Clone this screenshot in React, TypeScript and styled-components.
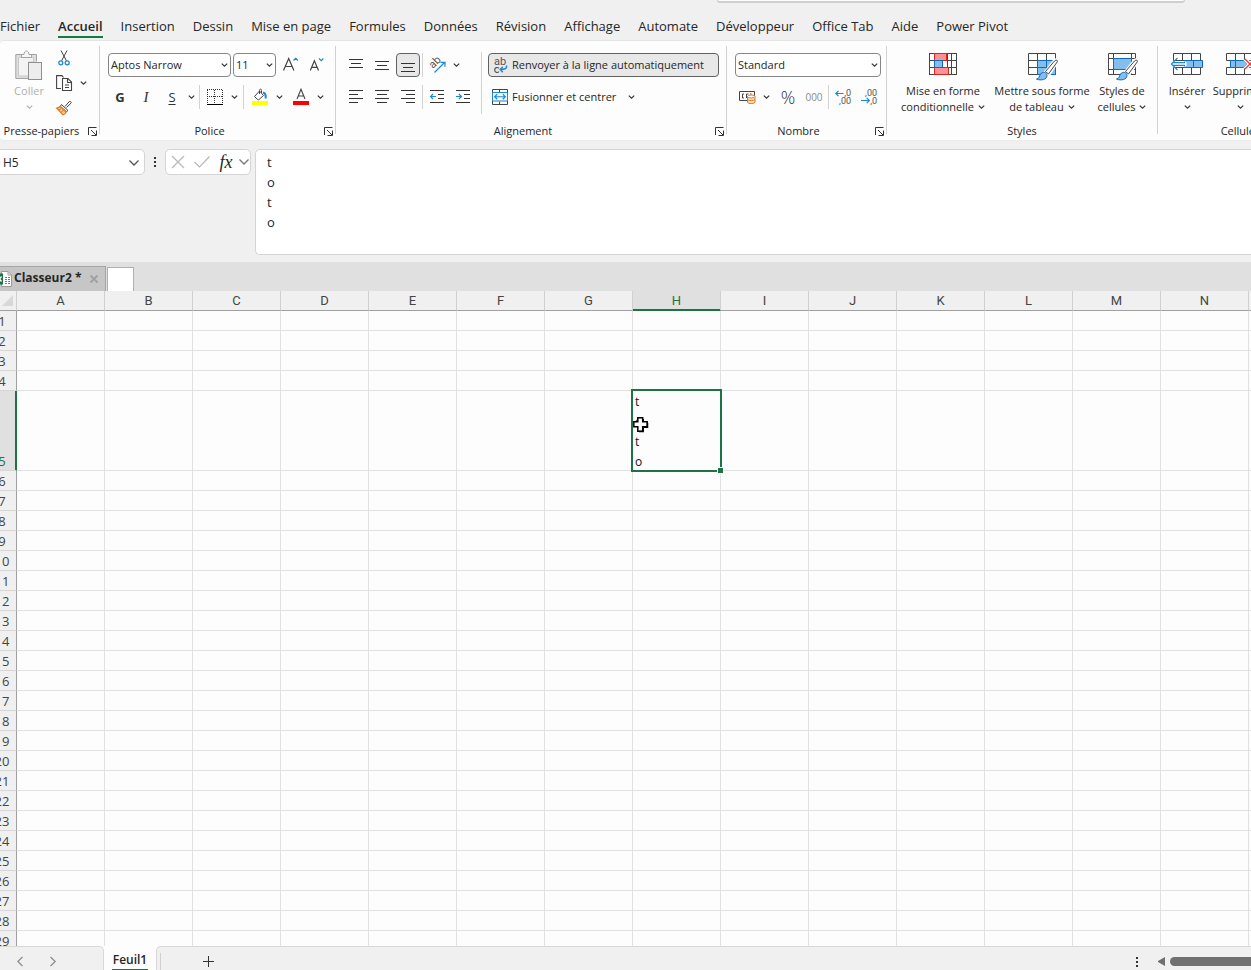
import React from 'react';
import styled, { createGlobalStyle, css } from 'styled-components';

const green = '#1f7246';
const ink = '#262626';
const line = '#444444';
const blue = '#1e88d0';
const uiFont = '"Open Sans", "Noto Sans", sans-serif';
const headFont = 'Roboto, "Noto Sans", sans-serif';

const GlobalStyle = createGlobalStyle`
  *, *::before, *::after { box-sizing: border-box; }
  body { margin: 0; background: #f0f0f0; color: ${ink}; font: 11px/16px ${uiFont}; }
  button, input, select, textarea { font: inherit; color: inherit; margin: 0; }
  button { border: 0; padding: 0; background: transparent; }
  svg { display: block; flex: none; overflow: visible; }
`;

const Window = styled.div`
  display: flex;
  flex-direction: column;
  height: 100vh;
  overflow: hidden;
`;

/* ---------- top strip and ribbon tabs ---------- */

const SearchEdge = styled.div`
  flex: none;
  width: 468px;
  height: 3px;
  margin: 0 66px 0 auto;
  background: #fdfdfd;
  border: 1px solid #cfcfcf;
  border-width: 0 1px 2px;
  border-radius: 0 0 4px 4px;
`;

const RibbonTabs = styled.nav`
  flex: none;
  display: flex;
  gap: 18px;
  height: 37px;
  padding-top: 13px;
  overflow: hidden;
`;

const RibbonTab = styled.button<{ $active?: boolean }>`
  flex: none;
  height: 22px;
  border-bottom: 2px solid ${p => (p.$active ? '#107c41' : 'transparent')};
  font-size: 13px;
  line-height: 20px;
  font-weight: ${p => (p.$active ? 600 : 400)};
  white-space: nowrap;
`;

/* ---------- ribbon ---------- */

const Ribbon = styled.div`
  flex: none;
  display: flex;
  height: 101px;
  padding: 5px 0 6px;
  background: #fdfdfd;
  border-top: 1px solid #e6e6e6;
  border-bottom: 1px solid #ececec;
  border-radius: 4px 0 0 4px;
  overflow: hidden;
`;

const Group = styled.section<{ $width: number }>`
  flex: none;
  display: flex;
  flex-direction: column;
  width: ${p => p.$width}px;
  border-right: 1px solid #d2d2d2;
`;

const GroupBody = styled.div<{ $left?: number }>`
  flex: 1;
  display: flex;
  padding: 7px 0 0 ${p => p.$left ?? 7}px;
`;

const GroupFooter = styled.footer`
  flex: none;
  display: flex;
  align-items: center;
  height: 16px;
  margin-bottom: -5px;
`;

const GroupName = styled.span`
  flex: 1;
  text-align: center;
  white-space: nowrap;
`;

const Launcher = styled.button`
  width: 16px;
  display: grid;
  place-items: center start;
  padding-left: 5px;
`;

const Rows = styled.div<{ $dense?: boolean }>`
  display: flex;
  flex-direction: column;
  gap: ${p => (p.$dense ? 1 : 8)}px;
  margin-top: ${p => (p.$dense ? -7 : 0)}px;
`;

const Row = styled.div`
  display: flex;
  align-items: center;
  height: 24px;
`;

const ComboRow = styled(Row)`
  padding-left: 1px;
`;

const AlignText = styled.div`
  display: flex;
  margin-left: auto;
  padding-right: 7px;
`;

const IconButton = styled.button<{ $active?: boolean }>`
  flex: none;
  display: grid;
  place-items: center;
  width: 26px;
  height: 24px;
  ${p =>
    p.$active &&
    css`
      background: #e8e8e8;
      border: 1px solid #616161;
      border-radius: 4px;
      width: 24px;
      margin: 0 1px;
    `}
`;

const ArrowButton = styled.button<{ $after?: number }>`
  flex: none;
  display: grid;
  place-items: center;
  width: 12px;
  height: 24px;
  margin-right: ${p => p.$after ?? 0}px;
`;

const Letter = styled.span<{ $bold?: boolean; $italic?: boolean; $underline?: boolean }>`
  font-size: 13px;
  line-height: 16px;
  color: #333;
  font-weight: ${p => (p.$bold ? 700 : 400)};
  ${p => p.$italic && 'font-style: italic; font-family: "Liberation Serif", serif; font-size: 15px;'}
  text-decoration: ${p => (p.$underline ? 'underline' : 'none')};
  text-underline-offset: 2px;
`;

const Percent = styled.span`
  font-size: 18px;
  line-height: 24px;
  font-weight: 300;
  color: #333;
`;

const Thousands = styled.span`
  font-size: 10px;
  color: #8a8a8a;
`;

const Divider = styled.i<{ $side?: number }>`
  flex: none;
  width: 1px;
  height: 24px;
  margin: 0 ${p => p.$side ?? 1}px;
  background: #d2d2d2;
`;

const TallDivider = styled.i`
  width: 1px;
  height: 62px;
  margin: -1px 6px 0 0;
  background: #d2d2d2;
`;

const ComboFrame = styled.span<{ $width: number }>`
  position: relative;
  flex: none;
  width: ${p => p.$width}px;
  margin-right: 2px;
  svg { position: absolute; right: 3px; top: 10px; pointer-events: none; }
`;

const Combo = styled.select`
  display: block;
  appearance: none;
  width: 100%;
  height: 24px;
  padding: 0 12px 0 2px;
  background: #fff;
  border: 1px solid #868686;
  border-radius: 4px;
`;

const WideButton = styled.button<{ $active?: boolean }>`
  display: flex;
  align-items: center;
  gap: 4px;
  height: 24px;
  padding: 0 8px 0 3px;
  border: 1px solid ${p => (p.$active ? '#616161' : 'transparent')};
  border-radius: 4px;
  background: ${p => (p.$active ? '#e8e8e8' : 'transparent')};
  width: ${p => (p.$active ? '231px' : 'auto')};
  white-space: nowrap;
`;

const BigButton = styled.button<{ $width: number; $muted?: boolean }>`
  flex: none;
  display: flex;
  flex-direction: column;
  align-items: center;
  width: ${p => p.$width}px;
  color: ${p => (p.$muted ? '#b0b0b0' : 'inherit')};
  white-space: nowrap;
`;

const BigIcon = styled.span`
  display: block;
  height: 30px;
`;

const LabelLine = styled.span`
  display: flex;
  align-items: center;
  justify-content: center;
  gap: 4px;
  height: 16px;
`;

/* ---------- formula bar ---------- */

const FormulaBar = styled.div`
  flex: none;
  display: flex;
  align-items: flex-start;
  padding: 8px 0 7px;
  background: #f0f0f0;
`;

const NameFrame = styled.div`
  position: relative;
  flex: none;
  width: 153px;
  margin-left: -8px;
  svg { position: absolute; right: 6px; top: 11px; pointer-events: none; }
`;

const NameBox = styled.input`
  display: block;
  width: 100%;
  height: 26px;
  padding: 0 24px 0 10px;
  background: #fff;
  border: 1px solid #d4d4d4;
  border-radius: 5px;
  font-size: 12px;
`;

const Dots = styled.span`
  flex: none;
  display: grid;
  place-items: center;
  width: 20px;
  height: 26px;
`;

const FormulaTools = styled.div`
  flex: none;
  display: flex;
  align-items: center;
  width: 86px;
  height: 26px;
  margin-right: 4px;
  background: #fff;
  border: 1px solid #d4d4d4;
  border-radius: 5px;
`;

const ToolButton = styled.button<{ $width: number }>`
  display: grid;
  place-items: center;
  width: ${p => p.$width}px;
  height: 24px;
  font: italic 18px/22px "Liberation Serif", serif;
`;

const FormulaInput = styled.textarea`
  flex: 1;
  min-width: 0;
  height: 106px;
  padding: 2px 11px;
  resize: none;
  background: #fff;
  border: 1px solid #d4d4d4;
  border-right: 0;
  border-radius: 5px 0 0 5px;
  outline: 0;
  font-size: 13px;
  line-height: 20px;
  overflow: hidden;
`;

/* ---------- workbook tabs ---------- */

const BookTabs = styled.div`
  flex: none;
  display: flex;
  align-items: flex-end;
  gap: 1px;
  height: 29px;
  background: #e0e0e0;
`;

const BookTab = styled.div`
  display: flex;
  align-items: center;
  height: 25px;
  width: 106px;
  background: #c6c6c6;
  border: 1px solid #a5a5a5;
  border-width: 1px 1px 0 0;
  font-weight: 700;
  font-size: 12px;
  white-space: nowrap;
`;

const BookMark = styled.span`
  margin-left: -4px;
`;

const BookName = styled.span`
  flex: 1;
  padding: 0 0 2px 2px;
`;

const CloseBook = styled.button`
  width: 22px;
  height: 20px;
  display: grid;
  place-items: center;
`;

const NewBook = styled.button`
  width: 27px;
  height: 24px;
  background: #fff;
  border: 1px solid #b0b0b0;
  border-bottom: 0;
`;

/* ---------- grid ---------- */

const SheetArea = styled.main`
  flex: 1;
  min-height: 0;
  overflow: hidden;
  background: #fdfdfd;
`;

const Sheet = styled.table`
  table-layout: fixed;
  width: 1px;
  margin-left: -12px;
  border-collapse: separate;
  border-spacing: 0;
`;

const RowCol = styled.col`
  width: 29px;
`;

const DataCol = styled.col`
  width: 88px;
`;

const headBase = css<{ $active?: boolean }>`
  padding: 1px 0 0;
  background: ${p => (p.$active ? '#e0e0e0' : '#f0f0f0')};
  color: ${p => (p.$active ? green : '#444')};
  font-weight: 400;
  font-size: 13px;
  line-height: 18px;
  text-align: center;
`;

const Corner = styled.td`
  padding: 0 3px 0 0;
  height: 20px;
  background: #f0f0f0;
  border-right: 1px solid #cfcfcf;
  border-bottom: 1px solid #a0a0a0;
  svg { margin-left: auto; }
`;

const ColHead = styled.th<{ $active?: boolean }>`
  ${headBase}
  height: 20px;
  font-family: ${headFont};
  border-right: 1px solid #d0d0d0;
  border-bottom: 1px solid ${p => (p.$active ? green : '#a0a0a0')};
  box-shadow: ${p => (p.$active ? `inset 0 -1px ${green}` : 'none')};
`;

const RowHead = styled.th<{ $active?: boolean }>`
  ${headBase}
  vertical-align: bottom;
  border-bottom: 1px solid #d6d6d6;
  border-right: 1px solid ${p => (p.$active ? green : '#a0a0a0')};
  box-shadow: ${p => (p.$active ? `inset -1px 0 ${green}` : 'none')};
`;

const Line = styled.tr<{ $tall?: boolean }>`
  height: ${p => (p.$tall ? 80 : 20)}px;
`;

const Cell = styled.td`
  position: relative;
  padding: 0 0 0 2px;
  border-right: 1px solid #e1e1e1;
  border-bottom: 1px solid #e1e1e1;
`;

const CellText = styled.div`
  height: 79px;
  padding-top: 1px;
  font-size: 12px;
  line-height: 20px;
  white-space: pre;
  color: #111;
`;

const Selection = styled.div`
  position: absolute;
  z-index: 1;
  inset: -2px;
  border: 2px solid ${green};
  &::after {
    content: '';
    position: absolute;
    right: -4px;
    bottom: -4px;
    width: 7px;
    height: 7px;
    background: ${green};
    border: 1px solid #fdfdfd;
  }
`;

const Pointer = styled.div`
  position: absolute;
  z-index: 2;
  left: 0;
  top: 26px;
`;

/* ---------- sheet bar ---------- */

const SheetBar = styled.footer`
  flex: none;
  display: flex;
  height: 24px;
  background: #fdfdfd;
`;

const SheetNav = styled.div`
  display: flex;
  align-items: center;
  width: 104px;
  padding: 6px 0 0 3px;
  background: #f0f0f0;
  border: 1px solid #d8d8d8;
  border-width: 1px 1px 0 0;
  border-radius: 0 5px 0 0;
`;

const NavButton = styled.button`
  display: grid;
  place-items: center;
  width: 33px;
  height: 16px;
`;

const SheetTab = styled.button`
  min-width: 36px;
  margin: 0 8px;
  padding-top: 4px;
  border-bottom: 1px solid ${green};
  font-weight: 600;
  font-size: 12px;
  line-height: 19px;
`;

const SheetRest = styled.div`
  flex: 1;
  display: flex;
  align-items: center;
  min-width: 0;
  padding: 6px 0 0 3px;
  background: #f0f0f0;
  border: 1px solid #d8d8d8;
  border-width: 1px 0 0 1px;
  border-radius: 5px 0 0 0;
`;

const AddSheet = styled.button`
  display: grid;
  place-items: center;
  width: 96px;
  height: 17px;
  border-left: 1px solid #d0d0d0;
`;

const ScrollZone = styled.div`
  display: flex;
  align-items: center;
  margin-left: auto;
`;

const ScrollLeft = styled.button`
  margin-left: 20px;
`;

const ScrollTrack = styled.div`
  width: 81px;
  height: 9px;
  margin-left: 5px;
  background: #707070;
  border-radius: 5px 0 0 5px;
`;

/* ---------- drawings ---------- */

const IconText = styled.text<{ $size: number }>`
  font: 400 ${p => p.$size}px ${headFont};
  fill: #555;
  stroke: none;
`;

const Chevron = ({ color = '#333' }: { color?: string }) => (
  <svg width="7" height="4" viewBox="0 0 7 4" fill="none" stroke={color} strokeWidth="1.2">
    <path d="M.8.6 3.5 3.2 6.2.6" />
  </svg>
);

const BigChevron = ({ color = '#555' }: { color?: string }) => (
  <svg width="10" height="6" viewBox="0 0 10 6" fill="none" stroke={color} strokeWidth="1.3">
    <path d="M.5.5 5 5 9.5.5" />
  </svg>
);

const LauncherIcon = () => (
  <svg width="9" height="9" viewBox="0 0 9 9" fill="none" stroke="#333">
    <path d="M8.500.5h-8v7.500M3 3l5 5M8.500 3.500v5H3.500" />
  </svg>
);

const PasteIcon = () => (
  <svg width="28" height="30" viewBox="0 3 28 30" fill="none" stroke="#a3a3a3">
    <path d="M.8 4.500h20.700v8h-8v16H.8z" fill="#dedede" stroke="none" />
    <path d="M13 28.500H.8v-24H7M16 4.500h5.500v7" />
    <path d="M3.500 7.500h15V12h-5v14h-10z" fill="#f3f3f3" stroke="#c8c8c8" />
    <path d="M6.500 4.500v3h10v-3h-2.500c0-2-1-3.500-2.500-3.500S9 2.500 9 4.500z" fill="#f6f6f6" />
    <rect x="13.500" y="12.500" width="13" height="17" fill="#ededed" stroke="#8f8f8f" />
  </svg>
);

const CutIcon = () => (
  <svg width="12" height="16" viewBox="0 0 12 16" fill="none" stroke={line}>
    <path d="M3 .5 8.500 11M9 .5 3.500 11" />
    <circle cx="2.800" cy="12.800" r="2" stroke={blue} strokeWidth="1.300" />
    <circle cx="9.200" cy="12.800" r="2" stroke={blue} strokeWidth="1.300" />
  </svg>
);

const CopyIcon = () => (
  <svg width="16" height="16" viewBox="0 0 16 16" fill="none" stroke={line} strokeWidth="1.100">
    <path d="M7.500 2.500 6 .6H.6v12.900H5M6.500 3.500V15.500h9V7l-3.500-3.500zM11.500 3.500V7.500h4M9 10h4M9 12.500h4" />
  </svg>
);

const PainterIcon = () => (
  <svg width="16" height="16" viewBox="0 0 16 16" fill="none">
    <path d="m9 6.500 4.300-5c.6-.8 2.600.8 1.800 1.600L10.500 7.500" fill="#fff" stroke={line} />
    <path d="m5.500 4.500 6.500 6-1.600 1.300-6-5.500z" fill="#fff" stroke={line} />
    <path d="M4 6.500c-.8.900-2 1.500-3.300 1.700L7 14.800c1.700-.4 2.800-1.500 3-2.800z" fill="#fbc88b" stroke="#e07a1c" strokeWidth="1.200" />
    <path d="m2 10 3-1M4.500 12.500l3-2" stroke="#e07a1c" />
  </svg>
);

const FontSizeIcon = ({ up }: { up?: boolean }) =>
  up ? (
    <svg width="16" height="16" viewBox="0 0 16 16" fill="none" stroke={line} strokeWidth="1.200">
      <path d="M.5 13.500 5.700 1.500l5.200 12M2.300 9.500h6.800" />
      <path d="m10.500 3.500 2.200-2.200 2.200 2.200" stroke={blue} />
    </svg>
  ) : (
    <svg width="16" height="16" viewBox="0 0 16 16" fill="none" stroke={line} strokeWidth="1.200">
      <path d="M1.300 13.500 5.400 3.700l4.100 9.800M2.800 10.300H8" />
      <path d="m10 1.500 2.200 2.200 2.200-2.200" stroke={blue} />
    </svg>
  );

const BordersIcon = () => (
  <svg width="16" height="16" viewBox="0 0 16 16" shapeRendering="crispEdges" stroke="#333" fill="none">
    <path d="M0 .5h16M0 7.500h16M.5 1v14M7.500 1v14M15.500 1v14" strokeDasharray="1 1" />
    <path d="M0 15.500h16" stroke="#000" />
  </svg>
);

const FillIcon = () => (
  <svg width="16" height="18" viewBox="0 0 16 18" fill="none">
    <path d="M2.500 8.500 7.500 3l4 4.500-4.500 4c-.5.500-1 .5-1.500 0z" fill="#fff" stroke={line} />
    <path d="M7.500 6V2.500C7.500.8 9.500.8 9.500 2.500V5" stroke={line} />
    <path d="M11 4.500c2 .3 3 2 2.700 6" stroke={blue} strokeWidth="2" />
    <path d="M0 13h16v4H0z" fill="#ff0" />
  </svg>
);

const FontColorIcon = () => (
  <svg width="16" height="18" viewBox="0 0 16 18" fill="none">
    <path d="M4 11 8 1.300 12 11M5.500 8h5" stroke={line} strokeWidth="1.100" />
    <path d="M0 13h16v4H0z" fill="#f00" />
  </svg>
);

const Bars = ({ d }: { d: string }) => (
  <svg width="14" height="14" viewBox="0 0 14 14" fill="none" stroke="#333" shapeRendering="crispEdges">
    <path d={d} />
  </svg>
);

const OrientIcon = () => (
  <svg width="17" height="16" viewBox="0 0 17 16" fill="none">
    <IconText $size={11} x="0" y="0" transform="translate(4 12) rotate(-45)">ab</IconText>
    <path d="m5.500 15.500 10-10M11.500 5.300H16V9.800" stroke={blue} strokeWidth="1.200" />
  </svg>
);

const IndentIcon = ({ out }: { out?: boolean }) => (
  <svg width="14" height="14" viewBox="0 0 14 14" fill="none" stroke="#333">
    <path d="M0 .5h14M7.500 4.500H14M7.500 8.500H14M0 12.500h14" shapeRendering="crispEdges" />
    <path d={out ? 'M.7 6.500H6M3 4 .6 6.500 3 9' : 'M0 6.500h5.300M3 4l2.400 2.500L3 9'} stroke={blue} strokeWidth="1.200" />
  </svg>
);

const WrapIcon = () => (
  <svg width="16" height="18" viewBox="0 0 16 18" fill="none">
    <IconText $size={11} x="2" y="9">ab</IconText>
    <path d="M7 12.300c-1.500-1.500-4.300-.8-4.300 1.700s2.800 3.200 4.300 1.700" stroke="#555" strokeWidth="1.200" />
    <path d="M14.500 9.500c.6 3-1.500 4-6 4M10.800 11l-2.600 2.500 2.600 2.800" stroke={blue} strokeWidth="1.500" />
  </svg>
);

const MergeIcon = () => (
  <svg width="16" height="16" viewBox="0 0 16 16" fill="none" stroke={line}>
    <path d="M.5.5h15v15H.5zM7.500.5v3M7.500 12.500v3" />
    <path d="M.5 3.500h15v8.500H.5z" fill="#f2f9fe" stroke={blue} />
    <path d="M2.500 7.750h11M5.200 5.200 2.700 7.750l2.500 2.500M10.800 5.200l2.500 2.550-2.500 2.500" stroke={blue} strokeWidth="1.200" />
  </svg>
);

const CurrencyIcon = () => (
  <svg width="17" height="14" viewBox="0 0 17 14" fill="none">
    <path d="M.5 1.500h15v9H.5z" stroke={line} />
    <path d="M5 4H3.500v4H5M9.500 4H7.500v4M12.500 4h-1.500" stroke={line} />
    <path d="M8.500 6.500v6c1 1.400 6.500 1.400 7.500 0v-6z" fill="#fde3c8" stroke="#e07a1c" />
    <ellipse cx="12.250" cy="6.500" rx="3.750" ry="1.500" fill="#fff" stroke="#e07a1c" />
    <path d="M8.500 9.500c1 1.400 6.500 1.400 7.500 0" stroke="#e07a1c" />
  </svg>
);

const DecimalIcon = ({ add }: { add?: boolean }) => (
  <svg width="16" height="16" viewBox="0 0 16 16" fill="none">
    {add ? (
      <>
        <IconText $size={9} x="16" y="7" textAnchor="end">,0</IconText>
        <IconText $size={9} x="16" y="15" textAnchor="end">,00</IconText>
        <path d="M.8 4.500h7.700M3.500 1.800.8 4.500l2.700 2.700" stroke={blue} strokeWidth="1.200" />
      </>
    ) : (
      <>
        <IconText $size={9} x="16" y="7" textAnchor="end">,00</IconText>
        <IconText $size={9} x="16" y="15" textAnchor="end">,0</IconText>
        <path d="M0 11.500h8.200M5.700 8.800l2.700 2.700-2.700 2.700" stroke={blue} strokeWidth="1.200" />
      </>
    )}
  </svg>
);

const ConditionalIcon = () => (
  <svg width="28" height="22" viewBox="0 0 28 22" shapeRendering="crispEdges" fill="#fff" stroke={line}>
    <path d="M.5.5h27v21H.5zM.5 7.500h27M.5 14.500h27M18.500.5v21M22.500.5v21" />
    <path d="M5.500.5h12v7h-12zM5.500 14.500h14v7h-14z" fill="#ff9095" stroke="#d9261c" />
    <path d="M5.500 7.500h8v7h-8z" fill="#83beec" stroke="#0f6cbd" />
    <path d="M14 8h4v6h-4z" stroke="none" />
  </svg>
);

const Brush = () => (
  <>
    <path d="M17.500 19 26.500 7.500c1.200-1.400 4-1 2.500 1.500L21 21.500z" fill="#fff" stroke="#fff" strokeWidth="3" />
    <path d="M17.500 18.500 26.500 8c1.200-1.400 4-1 2.500 1.200L20.500 21z" fill="#fff" stroke={line} />
    <path d="M8.500 26c3-.5 2.500-2.500 4-5 2-3 6.500-1.500 6.500 1.500 0 4-6 5.500-10.500 3.500z" fill="#83beec" stroke="#0f6cbd" />
  </>
);

const TableStyleIcon = () => (
  <svg width="28" height="22" viewBox="0 0 28 22" fill="none" stroke={line}>
    <path d="M.5.500h27v21H.5z" fill="#fff" />
    <path d="M9.500 7.500h18v14h-18z" fill="#83beec" />
    <path d="M.5 7.500h9M.5 14.500h9M9.500.5v7M18.500.5v7" />
    <path d="M9.500 21.500v-14h18v14zM9.500 14.500h18M18.500 7.500v14" stroke="#0f6cbd" />
    <Brush />
  </svg>
);

const CellStyleIcon = () => (
  <svg width="28" height="22" viewBox="0 0 28 22" fill="none" stroke={line}>
    <path d="M.5.5h27v21H.5zM5.500.5v21M23.500.5v21M.5 5.500h27M.5 16.500h27" fill="#fff" />
    <path d="M5.500 5.500h18v11h-18z" fill="#83beec" stroke="#0f6cbd" />
    <Brush />
  </svg>
);

const InsertIcon = () => (
  <svg width="28" height="22" viewBox="0 0 28 22" fill="none" stroke={line}>
    <path d="M.5.5h27v7H.5zM.5 14.500h27v7H.5zM9.500.5v7M18.500.5v7M9.500 14.500v7M18.500 14.500v7" fill="#fff" />
    <path d="M11.500 7.500h18v7h-18zM20.500 7.500v7" fill="#83beec" stroke="#0f6cbd" />
    <path d="M13 9H1v4h12z" fill="#fff" stroke="#fff" />
    <path d="M12 9.700H0M12 12.300H0M4.500 5-1.500 11l6 6" stroke={blue} strokeWidth="1.300" />
  </svg>
);

const DeleteIcon = () => (
  <svg width="28" height="22" viewBox="0 0 28 22" fill="none" stroke={line}>
    <path d="M.5.5h27v7H.5zM.5 14.500h27v7H.5zM9.500.5v7M18.500.5v7M9.500 14.500v7M18.500 14.500v7" fill="#fff" />
    <path d="M4.500 7.500h13l4 3.500-4 3.500h-13zM9.500 7.500v7" fill="#83beec" stroke="#0f6cbd" />
    <path d="m19 6 10 10M29 6 19 16" stroke="#fff" strokeWidth="4" />
    <path d="m19 6 10 10M29 6 19 16" stroke="#e8383d" strokeWidth="1.400" />
  </svg>
);

const BookIcon = () => (
  <svg width="16" height="16" viewBox="0 0 16 16">
    <path d="M5.500.5H12l3.500 3.500v11.500h-10z" fill="#fff" stroke="#9a9a9a" />
    <path d="M12 .5V4h3.500" fill="none" stroke="#9a9a9a" />
    <path d="M9 6.500h2M12 6.500h2M9 8.500h2M12 8.500h2M9 10.500h2M12 10.500h2M9 12.500h2M12 12.500h2" stroke="#3f9a68" />
    <path d="M-1 2.500h8v11h-8z" fill={green} />
    <path d="m1.500 5.500 4 5M5.500 5.500l-4 5" stroke="#fff" strokeWidth="1.300" />
  </svg>
);

const VerticalDots = () => (
  <svg width="2" height="10" viewBox="0 0 2 10" fill="#333" shapeRendering="crispEdges">
    <path d="M0 0h2v2H0zM0 4h2v2H0zM0 8h2v2H0z" />
  </svg>
);

/* ---------- page ---------- */

const tabs = [
  'Fichier', 'Accueil', 'Insertion', 'Dessin', 'Mise en page', 'Formules', 'Données',
  'Révision', 'Affichage', 'Automate', 'Développeur', 'Office Tab', 'Aide', 'Power Pivot',
];

const columns = 'ABCDEFGHIJKLMNO'.split('');
const rows = Array.from({ length: 29 }, (_, i) => i + 1);
const cellValue = 't\no\nt\no';

const RibbonGroup = ({
  name, width, left, launcher, children,
}: {
  name: string; width: number; left?: number; launcher?: boolean; children: React.ReactNode;
}) => (
  <Group $width={width} aria-label={name}>
    <GroupBody $left={left}>{children}</GroupBody>
    <GroupFooter>
      <GroupName>{name}</GroupName>
      {launcher && <Launcher aria-label={`Options ${name}`}><LauncherIcon /></Launcher>}
    </GroupFooter>
  </Group>
);

const ComboBox = ({ label, value, width }: { label: string; value: string; width: number }) => (
  <ComboFrame $width={width}>
    <Combo aria-label={label} defaultValue={value}>
      <option>{value}</option>
    </Combo>
    <Chevron />
  </ComboFrame>
);

const Arrow = ({ label, after }: { label: string; after?: number }) => (
  <ArrowButton aria-label={label} $after={after}><Chevron /></ArrowButton>
);

export default function App() {
  return (
    <Window>
      <GlobalStyle />
      <SearchEdge />
      <RibbonTabs>
        {tabs.map(t => <RibbonTab key={t} $active={t === 'Accueil'}>{t}</RibbonTab>)}
      </RibbonTabs>

      <Ribbon>
        <RibbonGroup name="Presse-papiers" width={100} launcher>
          <BigButton $width={44} $muted>
            <BigIcon><PasteIcon /></BigIcon>
            <LabelLine>Coller</LabelLine>
            <LabelLine><Chevron color="#b0b0b0" /></LabelLine>
          </BigButton>
          <Rows $dense>
            <Row><IconButton aria-label="Couper"><CutIcon /></IconButton></Row>
            <Row>
              <IconButton aria-label="Copier"><CopyIcon /></IconButton>
              <Arrow label="Options de copie" />
            </Row>
            <Row><IconButton aria-label="Reproduire la mise en forme"><PainterIcon /></IconButton></Row>
          </Rows>
        </RibbonGroup>

        <RibbonGroup name="Police" width={236} launcher>
          <Rows>
            <ComboRow>
              <ComboBox label="Police" value="Aptos Narrow" width={123} />
              <ComboBox label="Taille de police" value="11" width={43} />
              <IconButton aria-label="Augmenter la taille"><FontSizeIcon up /></IconButton>
              <IconButton aria-label="Réduire la taille"><FontSizeIcon /></IconButton>
            </ComboRow>
            <Row>
              <IconButton><Letter $bold>G</Letter></IconButton>
              <IconButton><Letter $italic>I</Letter></IconButton>
              <IconButton><Letter $underline>S</Letter></IconButton>
              <Arrow label="Options de soulignement" />
              <Divider $side={2} />
              <IconButton aria-label="Bordures"><BordersIcon /></IconButton>
              <Arrow label="Options de bordures" />
              <Divider $side={3} />
              <IconButton aria-label="Couleur de remplissage"><FillIcon /></IconButton>
              <Arrow label="Choisir la couleur de remplissage" after={3} />
              <IconButton aria-label="Couleur de police"><FontColorIcon /></IconButton>
              <Arrow label="Choisir la couleur de police" />
            </Row>
          </Rows>
        </RibbonGroup>

        <RibbonGroup name="Alignement" width={391} launcher>
          <Rows>
            <Row>
              <IconButton aria-label="Aligner en haut"><Bars d="M0 1.500h14M2 5.500h10M0 9.500h14" /></IconButton>
              <IconButton aria-label="Aligner au centre"><Bars d="M0 3.500h14M2 7.500h10M0 11.500h14" /></IconButton>
              <IconButton $active aria-label="Aligner en bas"><Bars d="M0 5.500h14M2 9.500h10M0 13.500h14" /></IconButton>
              <Divider />
              <IconButton aria-label="Orientation"><OrientIcon /></IconButton>
              <Arrow label="Options d'orientation" />
            </Row>
            <Row>
              <IconButton aria-label="Aligner à gauche"><Bars d="M0 .5h14M0 4.500h9M0 8.500h14M0 12.500h9" /></IconButton>
              <IconButton aria-label="Centrer"><Bars d="M0 .5h14M2 4.500h10M0 8.500h14M2 12.500h10" /></IconButton>
              <IconButton aria-label="Aligner à droite"><Bars d="M0 .5h14M5 4.500h9M0 8.500h14M5 12.500h9" /></IconButton>
              <Divider />
              <IconButton aria-label="Diminuer le retrait"><IndentIcon out /></IconButton>
              <IconButton aria-label="Augmenter le retrait"><IndentIcon /></IconButton>
            </Row>
          </Rows>
          <AlignText>
            <TallDivider />
            <Rows>
              <Row>
                <WideButton $active><WrapIcon />Renvoyer à la ligne automatiquement</WideButton>
              </Row>
              <Row>
                <WideButton><MergeIcon />Fusionner et centrer</WideButton>
                <Arrow label="Options de fusion" />
              </Row>
            </Rows>
          </AlignText>
        </RibbonGroup>

        <RibbonGroup name="Nombre" width={160} launcher>
          <Rows>
            <ComboRow><ComboBox label="Format de nombre" value="Standard" width={146} /></ComboRow>
            <Row>
              <IconButton aria-label="Format comptabilité"><CurrencyIcon /></IconButton>
              <Arrow label="Options de comptabilité" after={3} />
              <IconButton><Percent>%</Percent></IconButton>
              <IconButton><Thousands>000</Thousands></IconButton>
              <Divider />
              <IconButton aria-label="Ajouter une décimale"><DecimalIcon add /></IconButton>
              <IconButton aria-label="Réduire les décimales"><DecimalIcon /></IconButton>
            </Row>
          </Rows>
        </RibbonGroup>

        <RibbonGroup name="Styles" width={271} left={8}>
          <BigButton $width={96}>
            <BigIcon><ConditionalIcon /></BigIcon>
            <LabelLine>Mise en forme</LabelLine>
            <LabelLine>conditionnelle<Chevron /></LabelLine>
          </BigButton>
          <BigButton $width={102}>
            <BigIcon><TableStyleIcon /></BigIcon>
            <LabelLine>Mettre sous forme</LabelLine>
            <LabelLine>de tableau<Chevron /></LabelLine>
          </BigButton>
          <BigButton $width={58}>
            <BigIcon><CellStyleIcon /></BigIcon>
            <LabelLine>Styles de</LabelLine>
            <LabelLine>cellules<Chevron /></LabelLine>
          </BigButton>
        </RibbonGroup>

        <RibbonGroup name="Cellules" width={166} left={2}>
          <BigButton $width={54}>
            <BigIcon><InsertIcon /></BigIcon>
            <LabelLine>Insérer</LabelLine>
            <LabelLine><Chevron /></LabelLine>
          </BigButton>
          <BigButton $width={52}>
            <BigIcon><DeleteIcon /></BigIcon>
            <LabelLine>Supprimer</LabelLine>
            <LabelLine><Chevron /></LabelLine>
          </BigButton>
        </RibbonGroup>
      </Ribbon>

      <FormulaBar>
        <NameFrame>
          <NameBox aria-label="Zone Nom" defaultValue="H5" />
          <BigChevron />
        </NameFrame>
        <Dots><VerticalDots /></Dots>
        <FormulaTools>
          <ToolButton $width={24} aria-label="Annuler">
            <svg width="12" height="12" viewBox="0 0 12 12" stroke="#b8b8b8" strokeWidth="1.200"><path d="m0 0 12 12M12 0 0 12" /></svg>
          </ToolButton>
          <ToolButton $width={24} aria-label="Entrer">
            <svg width="16" height="12" viewBox="0 0 16 12" fill="none" stroke="#b8b8b8" strokeWidth="1.200"><path d="m.5 6 5 5L15.500.5" /></svg>
          </ToolButton>
          <ToolButton $width={24}>fx</ToolButton>
          <ToolButton $width={11} aria-label="Fonctions récentes"><BigChevron color="#777" /></ToolButton>
        </FormulaTools>
        <FormulaInput aria-label="Barre de formule" defaultValue={cellValue} />
      </FormulaBar>

      <BookTabs>
        <BookTab>
          <BookMark><BookIcon /></BookMark>
          <BookName>Classeur2 *</BookName>
          <CloseBook aria-label="Fermer">
            <svg width="8" height="8" viewBox="0 0 8 8" stroke="#a0a0a0" strokeWidth="1.800"><path d="m.5.5 7 7M7.500.5l-7 7" /></svg>
          </CloseBook>
        </BookTab>
        <NewBook aria-label="Nouveau classeur" />
      </BookTabs>

      <SheetArea>
        <Sheet>
          <colgroup>
            <RowCol />
            {columns.map(c => <DataCol key={c} />)}
          </colgroup>
          <thead>
            <tr>
              <Corner>
                <svg width="11" height="11" viewBox="0 0 11 11" fill="#d8d8d8"><path d="M11 0v11H0z" /></svg>
              </Corner>
              {columns.map(c => <ColHead key={c} scope="col" $active={c === 'H'}>{c}</ColHead>)}
            </tr>
          </thead>
          <tbody>
            {rows.map(r => (
              <Line key={r} $tall={r === 5}>
                <RowHead scope="row" $active={r === 5}>{r}</RowHead>
                {columns.map(c =>
                  r === 5 && c === 'H' ? (
                    <Cell key={c}>
                      <CellText>{cellValue}</CellText>
                      <Selection />
                      <Pointer>
                        <svg width="15" height="15" viewBox="0 0 15 15" fill="#fff" stroke="#000" strokeWidth="1.500">
                          <path d="M4.800.8h4.900v4h4.500v5h-4.500v4.400H4.800V9.800H.8v-5h4z" />
                          <path d="M10.200 2v2.800M14.500 6v4.300h-4.300M10.200 11v3.600H6" fill="none" />
                        </svg>
                      </Pointer>
                    </Cell>
                  ) : (
                    <Cell key={c} />
                  ),
                )}
              </Line>
            ))}
          </tbody>
        </Sheet>
      </SheetArea>

      <SheetBar>
        <SheetNav>
          <NavButton aria-label="Feuille précédente">
            <svg width="6" height="9" viewBox="0 0 6 9" fill="none" stroke="#8a8a8a" strokeWidth="1.200"><path d="M5.500 0 .8 4.500 5.500 9" /></svg>
          </NavButton>
          <NavButton aria-label="Feuille suivante">
            <svg width="6" height="9" viewBox="0 0 6 9" fill="none" stroke="#8a8a8a" strokeWidth="1.200"><path d="m.5 0 4.700 4.500L.5 9" /></svg>
          </NavButton>
        </SheetNav>
        <SheetTab>Feuil1</SheetTab>
        <SheetRest>
          <AddSheet aria-label="Nouvelle feuille">
            <svg width="11" height="11" viewBox="0 0 11 11" stroke="#333" shapeRendering="crispEdges"><path d="M5.500 0v11M0 5.500h11" /></svg>
          </AddSheet>
          <ScrollZone>
            <VerticalDots />
            <ScrollLeft aria-label="Défiler vers la gauche">
              <svg width="7" height="9" viewBox="0 0 7 9" fill="#707070"><path d="M7 0v9L0 5V4z" /></svg>
            </ScrollLeft>
            <ScrollTrack />
          </ScrollZone>
        </SheetRest>
      </SheetBar>
    </Window>
  );
}
